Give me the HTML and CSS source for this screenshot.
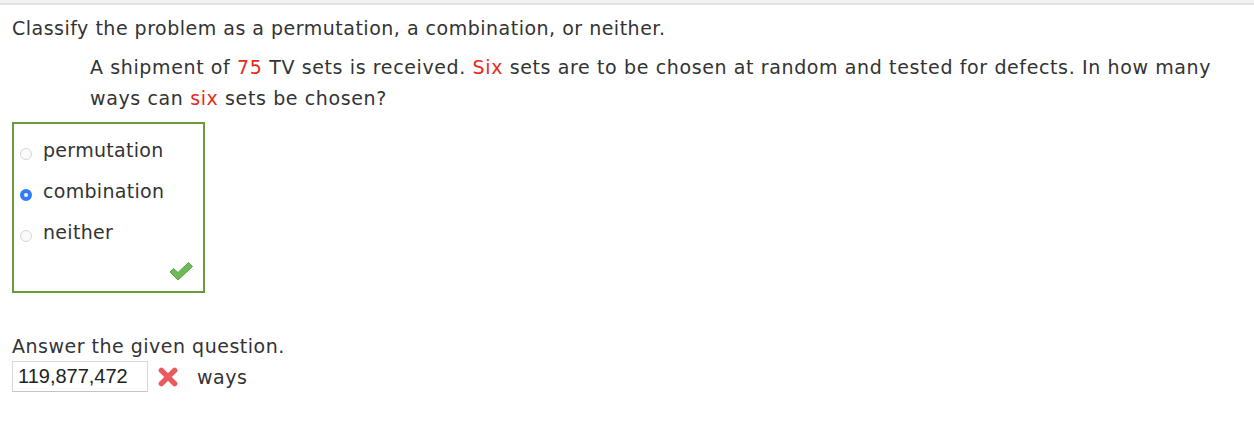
FILE: index.html
```html
<!DOCTYPE html>
<html lang="en">
<head>
    <meta charset="UTF-8">
    <title>Classify the problem</title>
    <link rel="stylesheet" href="styles.css">
</head>
<body>
    <div class="top-bar"></div>

    <main class="question">
        <p class="prompt">Classify the problem as a permutation, a combination, or neither.</p>

        <p class="problem">A shipment of <span class="hl">75</span> TV sets is received. <span class="hl">Six</span> sets are to be chosen at random and tested for defects. In how many ways can <span class="hl">six</span> sets be chosen?</p>

        <div class="choice-box">
            <label class="choice">
                <span class="radio"></span>
                <span>permutation</span>
            </label>
            <label class="choice">
                <span class="radio checked"></span>
                <span>combination</span>
            </label>
            <label class="choice">
                <span class="radio"></span>
                <span>neither</span>
            </label>
            <svg class="check-icon" viewBox="0 0 26 20" xmlns="http://www.w3.org/2000/svg">
                <path d="M2 11 L5.5 7.5 L10 11.5 L20.5 1.5 L24.5 5.5 L10 19 Z" fill="#6cbb58" stroke="#58a447" stroke-width="1" stroke-linejoin="round"/>
            </svg>
        </div>

        <p class="answer-label">Answer the given question.</p>
        <div class="answer-row">
            <input class="answer-input" type="text" value="119,877,472">
            <svg class="x-icon" viewBox="0 0 20 20" xmlns="http://www.w3.org/2000/svg">
                <path d="M4 4 L16 16 M16 4 L4 16" stroke="#ea5a5e" stroke-width="5" stroke-linecap="round"/>
            </svg>
            <span class="unit">ways</span>
        </div>
    </main>
</body>
</html>
```

FILE: styles.css
```css
/* Basic reset & font */
body, html {
    margin: 0;
    padding: 0;
    background: #fff;
    color: #333;
    font-family: "DejaVu Sans", Verdana, sans-serif;
    font-size: 19px;
}

.top-bar {
    height: 3px;
    background: #f2f2f2;
    border-bottom: 2px solid #e2e2e2;
}

.question {
    padding: 0 12px;
    letter-spacing: 0.5px;
}

.prompt {
    margin: 12px 0 0 0;
    line-height: 22px;
}

.problem {
    margin: 13px 0 0 78px;
    line-height: 31px;
    letter-spacing: 0.62px;
}

.hl {
    color: #e8291c;
}

/* Choice box */
.choice-box {
    width: 193px;
    height: 171px;
    margin-top: 8px;
    border: 2px solid #6a9a3a;
    position: relative;
    padding-top: 5px;
    box-sizing: border-box;
}

.choice {
    display: flex;
    align-items: center;
    height: 41px;
    padding-left: 6px;
    letter-spacing: 0.3px;
}

.radio {
    width: 12px;
    height: 12px;
    border-radius: 50%;
    border: 1px solid #d6d6d6;
    background: #fafafa;
    box-sizing: border-box;
    margin-right: 11px;
    margin-top: 8px;
    flex-shrink: 0;
}

.radio.checked {
    border: 4px solid #2f7cf6;
    background: #fff;
}

.check-icon {
    position: absolute;
    right: 9px;
    bottom: 10px;
    width: 26px;
    height: 20px;
}

/* Answer */
.answer-label {
    margin: 42px 0 0 0;
    line-height: 22px;
}

.answer-row {
    display: flex;
    align-items: center;
    margin-top: 4px;
}

.answer-input {
    width: 136px;
    height: 31px;
    box-sizing: border-box;
    border: 1px solid #d8d8d8;
    border-bottom-color: #c4c4c4;
    padding: 0 5px;
    font-family: "Liberation Sans", Arial, sans-serif;
    font-size: 20px;
    letter-spacing: 0;
    color: #222;
}

.x-icon {
    width: 22px;
    height: 22px;
    margin-left: 9px;
}

.unit {
    margin-left: 18px;
}
```
